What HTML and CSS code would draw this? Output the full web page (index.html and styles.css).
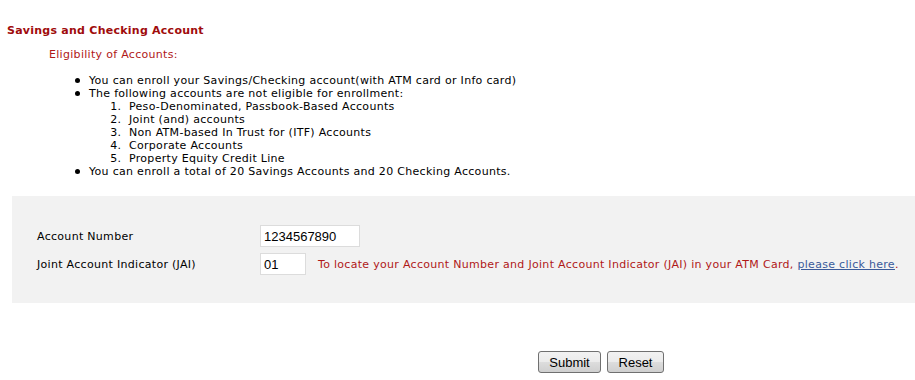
FILE: index.html
```html
<!DOCTYPE html>
<html>
<head>
<meta charset="utf-8">
<link rel="stylesheet" href="styles.css">
</head>
<body>
<div class="page">
  <h1 class="title">Savings and Checking Account</h1>
  <p class="subtitle">Eligibility of Accounts:</p>
  <ul class="bullets">
    <li class="bullet">You can enroll your Savings/Checking account(with ATM card or Info card)</li>
    <li class="bullet">The following accounts are not eligible for enrollment:
      <ol class="numbers">
        <li>Peso-Denominated, Passbook-Based Accounts</li>
        <li>Joint (and) accounts</li>
        <li>Non ATM-based In Trust for (ITF) Accounts</li>
        <li>Corporate Accounts</li>
        <li>Property Equity Credit Line</li>
      </ol>
    </li>
    <li class="bullet">You can enroll a total of 20 Savings Accounts and 20 Checking Accounts.</li>
  </ul>
  <div class="panel">
    <div class="row">
      <label class="label">Account Number</label>
      <input class="field field-long" type="text" value="1234567890">
    </div>
    <div class="row">
      <label class="label">Joint Account Indicator (JAI)</label>
      <input class="field field-short" type="text" value="01">
      <span class="hint">To locate your Account Number and Joint Account Indicator (JAI) in your ATM Card, <a class="link" href="#">please click here</a>.</span>
    </div>
  </div>
  <div class="actions">
    <button class="btn btn-submit" type="button">Submit</button>
    <button class="btn btn-reset" type="button">Reset</button>
  </div>
</div>
</body>
</html>
```
FILE: styles.css
```css
html, body {
  margin: 0;
  padding: 0;
  background: #ffffff;
}
body {
  font-family: "DejaVu Sans", Verdana, sans-serif;
  font-size: 11px;
  line-height: 13px;
  letter-spacing: 0.3px;
  color: #000000;
  width: 915px;
  overflow: hidden;
}
.page {
  padding-top: 24px;
}
.title {
  margin: 0 0 0 7px;
  font-size: 11px;
  line-height: 13px;
  font-weight: bold;
  letter-spacing: 0.25px;
  color: #a00c0c;
}
.subtitle {
  margin: 11px 0 0 49px;
  color: #b01818;
}
.bullets {
  margin: 13px 0 0 0;
  padding: 0 0 0 89px;
  list-style: none;
}
.bullet {
  position: relative;
  line-height: 13px;
}
.bullet::before {
  content: "";
  position: absolute;
  left: -14px;
  top: 4px;
  width: 5px;
  height: 5px;
  border-radius: 50%;
  background: #000;
}
.numbers {
  margin: 0;
  padding: 0 0 0 40px;
}
.numbers li::marker {
  content: counter(list-item) ".\00a0\00a0";
}
.panel {
  margin: 18px 0 0 12px;
  width: 920px;
  background: #f2f2f2;
  padding: 29px 0 28px 25px;
  box-sizing: border-box;
  display: flex;
  flex-direction: column;
  gap: 6px;
}
.row {
  display: flex;
  align-items: center;
  height: 22px;
}
.label {
  width: 223px;
  flex: none;
}
.field {
  height: 22px;
  box-sizing: border-box;
  border: 1px solid #dcdcdc;
  background: #ffffff;
  font-family: "Liberation Sans", Arial, sans-serif;
  font-size: 13px;
  letter-spacing: 0;
  padding: 0 3px;
  margin: 0;
  color: #000;
  outline: none;
}
.field-long {
  width: 100px;
}
.field-short {
  width: 46px;
}
.hint {
  margin-left: 12px;
  color: #b01818;
  white-space: nowrap;
}
.link {
  color: #3a5a9a;
  text-decoration: underline;
}
.actions {
  margin: 48px 0 0 538px;
  display: flex;
  gap: 6px;
}
.btn {
  height: 22px;
  box-sizing: border-box;
  border: 1px solid #707070;
  border-radius: 3px;
  background: linear-gradient(#f2f2f2 0%, #ebebeb 50%, #dddddd 51%, #cfcfcf 100%);
  font-family: "Liberation Sans", Arial, sans-serif;
  font-size: 13px;
  letter-spacing: 0;
  color: #000;
  padding: 0;
  margin: 0;
}
.btn-submit {
  width: 63px;
}
.btn-reset {
  width: 57px;
}
```
